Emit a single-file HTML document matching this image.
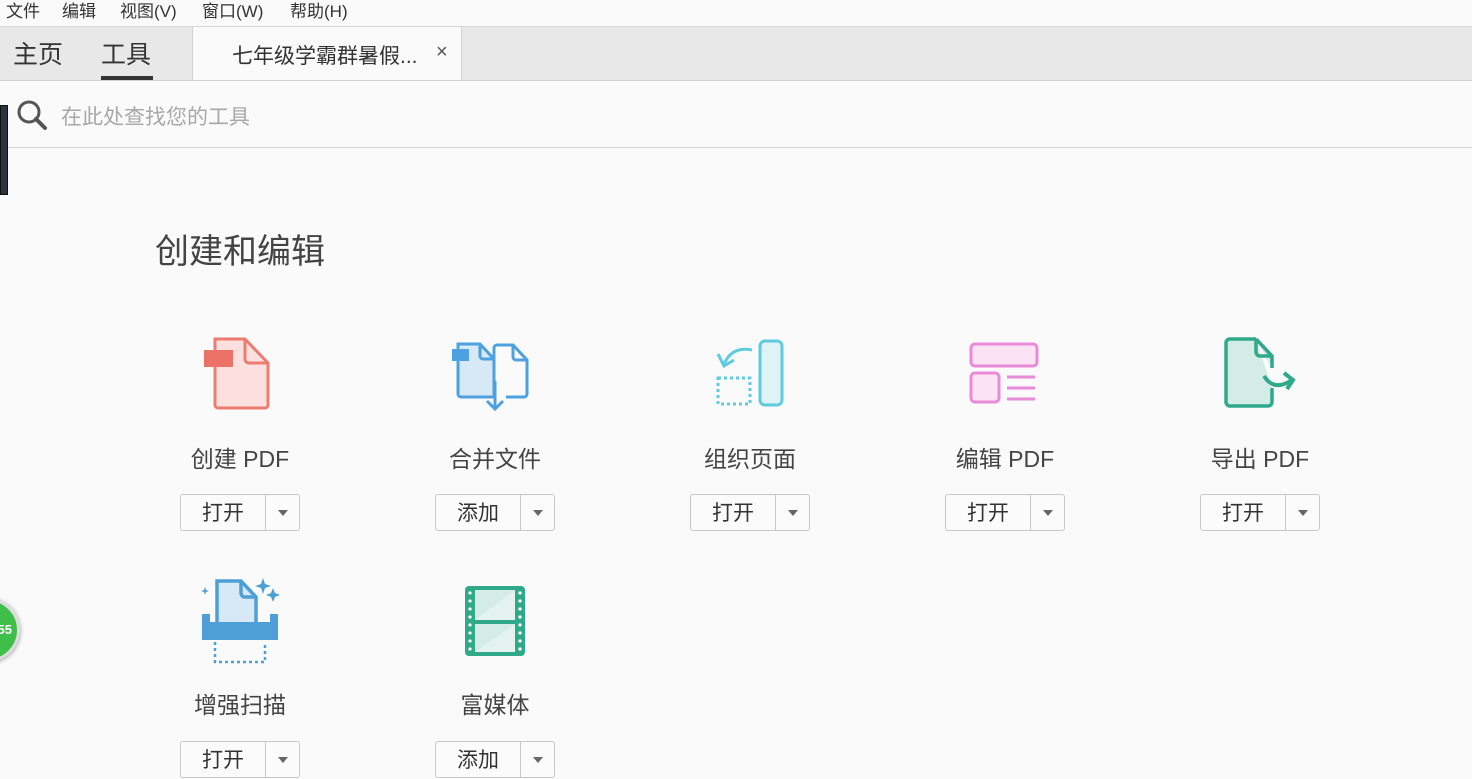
<!DOCTYPE html>
<html><head><meta charset="utf-8"><style>
*{margin:0;padding:0;box-sizing:border-box}
body{width:1472px;height:776px;overflow:hidden;background:#fafafa;font-family:"Liberation Sans","Noto Sans CJK SC",sans-serif;color:#333;position:relative}
.menu{position:absolute;top:0;left:0;width:1472px;height:27px;background:#fafafa;border-bottom:1px solid #d4d4d4;font-size:17px;line-height:23px}
.menu span{position:absolute;top:0}
.tabs{position:absolute;top:27px;left:0;width:1472px;height:54px;background:#e8e8e8;border-bottom:1px solid #cfcfcf}
.tabs .t{position:absolute;top:8px;font-size:25px;color:#333}
.doc{position:absolute;left:192px;top:0;width:270px;height:53px;background:#fafafa;border-left:1px solid #d0d0d0;border-right:1px solid #d0d0d0}
.search{position:absolute;top:81px;left:0;width:1472px;height:67px;border-bottom:1px solid #d6d6d6}
h1{position:absolute;left:155px;top:224px;font-size:34px;font-weight:normal;color:#444}
.tool{position:absolute;width:240px;text-align:center}
.tool svg{display:block;margin:0 auto}
.lbl{font-size:23px;color:#444;position:absolute;width:240px;left:0;text-align:center}
.btn{position:absolute;left:60px;width:120px;height:37px;border:1px solid #c8c8c8;border-radius:3px;background:#fbfbfb;font-size:21px;line-height:37px}
.btn .a{position:absolute;left:0;width:84px;text-align:center}
.btn .b{position:absolute;left:84px;top:0;width:35px;height:35px;border-left:1px solid #c8c8c8}
.btn .b:after{content:"";position:absolute;left:12px;top:15px;border:5px solid transparent;border-top:6px solid #666}
</style></head><body>
<div class="menu"><span style="left:6px">文件</span><span style="left:62px">编辑</span><span style="left:120px">视图(V)</span><span style="left:202px">窗口(W)</span><span style="left:290px">帮助(H)</span></div>
<div class="tabs">
<span class="t" style="left:13px">主页</span>
<span class="t" style="left:101px">工具</span>
<div style="position:absolute;left:101px;top:49px;width:52px;height:4px;background:#333"></div>
<div class="doc"><span style="position:absolute;left:39px;top:13px;font-size:21px">七年级学霸群暑假...</span><span style="position:absolute;left:243px;top:14px;font-size:20px;color:#555">×</span></div>
</div>
<div class="search">
<svg style="position:absolute;left:16px;top:18px" width="32" height="32" viewBox="0 0 32 32"><circle cx="13" cy="13" r="10" fill="none" stroke="#555" stroke-width="3"/><path d="M20 20l9 9" stroke="#555" stroke-width="4" stroke-linecap="round"/></svg>
<span style="position:absolute;left:61px;top:20px;font-size:21px;color:#a8a8a8">在此处查找您的工具</span>
</div>
<div style="position:absolute;left:0;top:105px;width:8px;height:90px;background:#2d3440;border:1px solid #111"></div>
<div style="position:absolute;left:-44px;top:598px;width:64px;height:64px;border-radius:50%;background:#3fbe4a;border:3px solid #ddd;box-shadow:0 1px 4px #999;color:#fff;font-size:13px;font-weight:bold;line-height:58px;text-align:right;padding-right:5px">55</div>
<h1>创建和编辑</h1>

<div class="tool" style="left:120px;top:336px">
<svg width="80" height="74" viewBox="0 0 80 74"><path d="M15 3h30l23 24v42a3 3 0 0 1-3 3H18a3 3 0 0 1-3-3z" fill="#fbe0df" stroke="#ec7b72" stroke-width="3"/><path d="M45 3v20a4 4 0 0 0 4 4h19" fill="none" stroke="#ec7b72" stroke-width="3"/><rect x="4" y="14" width="29" height="17" fill="#ec7268"/></svg>
<div class="lbl" style="top:104px">创建 PDF</div><div class="btn" style="top:158px"><span class="a">打开</span><span class="b"></span></div></div>

<div class="tool" style="left:375px;top:336px">
<svg width="90" height="78" viewBox="0 0 90 78"><path d="M8 8h22l14 15v38H11a3 3 0 0 1-3-3z" fill="#d7e8f6" stroke="#4ea1e0" stroke-width="3"/><path d="M30 8v12a3 3 0 0 0 3 3h11" fill="none" stroke="#4ea1e0" stroke-width="3"/><path d="M44 61V12a3 3 0 0 1 3-3h16l14 15v34a3 3 0 0 1-3 3H56" fill="#fafafa" stroke="#4ea1e0" stroke-width="3"/><path d="M63 9v12a3 3 0 0 0 3 3h11" fill="none" stroke="#4ea1e0" stroke-width="3"/><path d="M45 45v28M37 65l8 8 8-8" fill="none" stroke="#4ea1e0" stroke-width="3"/><rect x="2" y="13" width="17" height="12" fill="#4ea1e0"/></svg>
<div class="lbl" style="top:104px">合并文件</div><div class="btn" style="top:158px"><span class="a">添加</span><span class="b"></span></div></div>

<div class="tool" style="left:630px;top:336px">
<svg width="80" height="74" viewBox="0 0 80 74"><rect x="50" y="5" width="22" height="64" rx="5" fill="#dff2f6" stroke="#5fcbe0" stroke-width="3"/><path d="M8 42h32v26H8z" fill="none" stroke="#5fcbe0" stroke-width="3" stroke-dasharray="3 3"/><path d="M42 14q-20 -4 -28 14M8 18l6 12 10-6" fill="none" stroke="#5fcbe0" stroke-width="3"/></svg>
<div class="lbl" style="top:104px">组织页面</div><div class="btn" style="top:158px"><span class="a">打开</span><span class="b"></span></div></div>

<div class="tool" style="left:885px;top:336px">
<svg width="80" height="74" viewBox="0 0 80 74"><rect x="6" y="8" width="66" height="22" rx="4" fill="#fbe3f5" stroke="#e88bd8" stroke-width="3"/><rect x="6" y="37" width="28" height="29" rx="4" fill="#fbe3f5" stroke="#e88bd8" stroke-width="3"/><path d="M42 41h28M42 52h28M42 63h28" stroke="#e88bd8" stroke-width="3"/></svg>
<div class="lbl" style="top:104px">编辑 PDF</div><div class="btn" style="top:158px"><span class="a">打开</span><span class="b"></span></div></div>

<div class="tool" style="left:1140px;top:336px">
<svg width="80" height="74" viewBox="0 0 80 74"><path d="M36 3l16 17v12M52 52v14a4 4 0 0 1-4 4H10a4 4 0 0 1-4-4V7a4 4 0 0 1 4-4h26" fill="#d3ece5" stroke="#2fa98a" stroke-width="3.5"/><path d="M36 3v13a4 4 0 0 0 4 4h12" fill="none" stroke="#2fa98a" stroke-width="3.5"/><path d="M44 40q10 16 28 4M64 37l9 7-6 9" fill="none" stroke="#2fa98a" stroke-width="4"/></svg>
<div class="lbl" style="top:104px">导出 PDF</div><div class="btn" style="top:158px"><span class="a">打开</span><span class="b"></span></div></div>

<div class="tool" style="left:120px;top:576px">
<svg width="86" height="88" viewBox="0 0 86 88"><path d="M20 5h24l15 16v30H20z" fill="#d7e8f6" stroke="#4e9fd6" stroke-width="3.5"/><path d="M44 5v12a4 4 0 0 0 4 4h11" fill="none" stroke="#4e9fd6" stroke-width="3.5"/><path d="M5 38h8v10h60V38h8v26H5z" fill="#4e9fd6"/><rect x="13" y="46" width="60" height="18" fill="#4e9fd6"/><path d="M18 66v20h50V66" fill="none" stroke="#4e9fd6" stroke-width="2.5" stroke-dasharray="3 3"/><path d="M66 2l2 6 6 2-6 2-2 6-2-6-6-2 6-2zM76 12l2 5 5 2-5 2-2 5-2-5-5-2 5-2zM8 11l1 3 3 1-3 1-1 3-1-3-3-1 3-1z" fill="#4e9fd6"/></svg>
<div class="lbl" style="top:110px">增强扫描</div><div class="btn" style="top:165px"><span class="a">打开</span><span class="b"></span></div></div>

<div class="tool" style="left:375px;top:576px">
<svg width="64" height="84" viewBox="0 0 64 84"><rect x="2" y="10" width="60" height="70" rx="4" fill="#2fa98a"/><path d="M12 14h40v30H12z" fill="#d3ece5"/><path d="M12 48h40v28H12z" fill="#d3ece5"/><path d="M12 44L52 14v30zM12 76L52 48v28z" fill="#fff" opacity=".4"/><g fill="#fff"><circle cx="7" cy="17" r="1.6"/><circle cx="7" cy="25" r="1.6"/><circle cx="7" cy="33" r="1.6"/><circle cx="7" cy="41" r="1.6"/><circle cx="7" cy="49" r="1.6"/><circle cx="7" cy="57" r="1.6"/><circle cx="7" cy="65" r="1.6"/><circle cx="7" cy="73" r="1.6"/><circle cx="57" cy="17" r="1.6"/><circle cx="57" cy="25" r="1.6"/><circle cx="57" cy="33" r="1.6"/><circle cx="57" cy="41" r="1.6"/><circle cx="57" cy="49" r="1.6"/><circle cx="57" cy="57" r="1.6"/><circle cx="57" cy="65" r="1.6"/><circle cx="57" cy="73" r="1.6"/></g></svg>
<div class="lbl" style="top:110px">富媒体</div><div class="btn" style="top:165px"><span class="a">添加</span><span class="b"></span></div></div>
</body></html>
